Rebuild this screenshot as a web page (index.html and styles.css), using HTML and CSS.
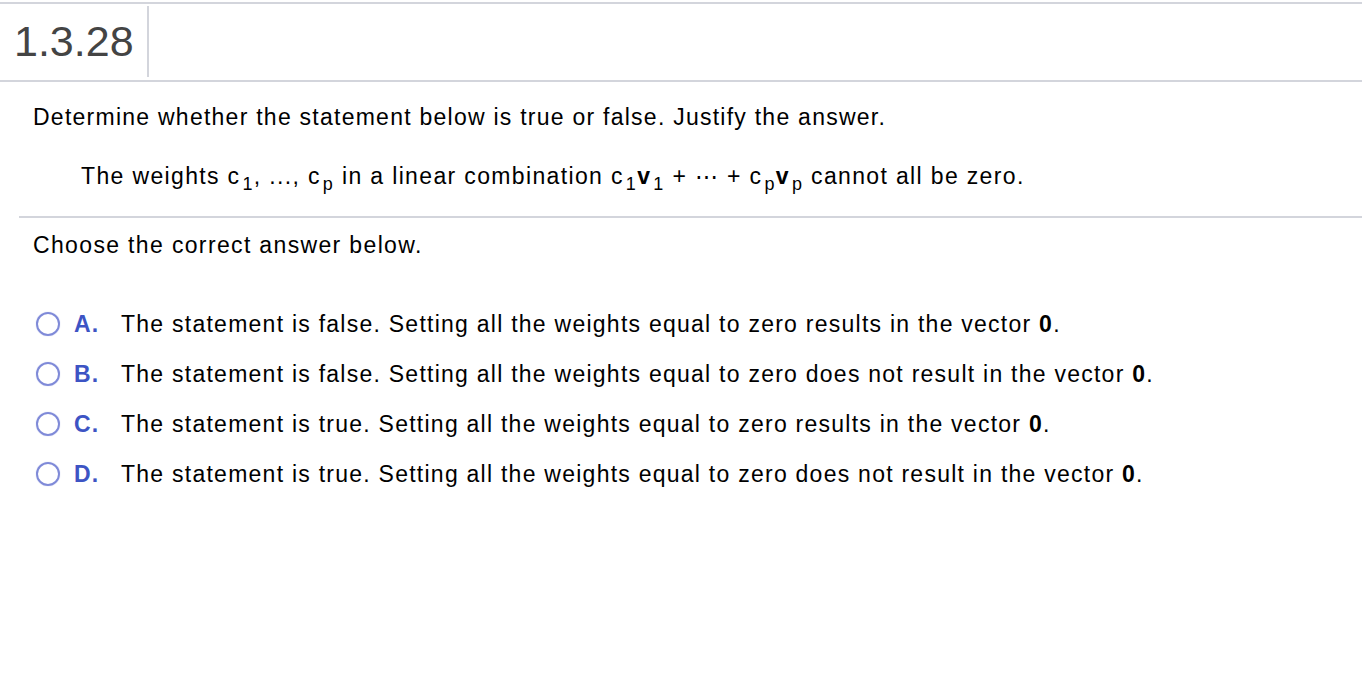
FILE: index.html
```html
<!DOCTYPE html>
<html>
<head>
<meta charset="utf-8">
<link rel="stylesheet" href="styles.css">
</head>
<body>
<div class="header">
  <div class="title">1.3.28</div>
</div>
<div class="content">
  <div class="line prompt">Determine whether the statement below is true or false. Justify the answer.</div>
  <div class="line statement">The weights c<sub>1</sub>, ..., c<sub>p</sub> in a linear combination c<sub>1</sub><b>v</b><sub>1</sub> + ⋯ + c<sub>p</sub><b>v</b><sub>p</sub> cannot all be zero.</div>
</div>
<div class="rule"></div>
<div class="content">
  <div class="line choose">Choose the correct answer below.</div>
  <div class="options">
    <div class="option"><span class="radio"></span><span class="letter">A.</span><span class="text">The statement is false. Setting all the weights equal to zero results in the vector <b>0</b>.</span></div>
    <div class="option"><span class="radio"></span><span class="letter">B.</span><span class="text">The statement is false. Setting all the weights equal to zero does not result in the vector <b>0</b>.</span></div>
    <div class="option"><span class="radio"></span><span class="letter">C.</span><span class="text">The statement is true. Setting all the weights equal to zero results in the vector <b>0</b>.</span></div>
    <div class="option"><span class="radio"></span><span class="letter">D.</span><span class="text">The statement is true. Setting all the weights equal to zero does not result in the vector <b>0</b>.</span></div>
  </div>
</div>
</body>
</html>
```
FILE: styles.css
```css
html, body {
  margin: 0;
  padding: 0;
  background: #fff;
  font-family: "Liberation Sans", Arial, sans-serif;
  color: #000;
}
.header {
  margin-top: 2px;
  border-top: 2px solid #d3d5dc;
  border-bottom: 2px solid #d3d5dc;
  display: flex;
  align-items: stretch;
  padding: 2px 0 3px 0;
  box-sizing: border-box;
  height: 80px;
}
.title {
  width: 133px;
  padding-left: 14px;
  border-right: 2px solid #d3d5dc;
  font-size: 43px;
  color: #444;
  display: flex;
  align-items: center;
}
.content {
  padding-left: 33px;
}
.line {
  font-size: 23px;
  letter-spacing: 1.25px;
  line-height: 26px;
  height: 26px;
  white-space: nowrap;
}
.prompt {
  padding-top: 22px;
}
.statement {
  margin-top: 33px;
  padding-left: 48px;
  letter-spacing: 1.35px;
}
.statement sub {
  font-size: 18px;
  vertical-align: -6px;
  line-height: 0;
  margin-left: 2px;
}
.rule {
  margin-top: 27px;
  margin-left: 19px;
  border-top: 2px solid #d3d5dc;
}
.choose {
  margin-top: 14px;
  letter-spacing: 1.35px;
}
.options {
  margin-top: 53px;
  display: flex;
  flex-direction: column;
  gap: 24px;
}
.option {
  display: flex;
  align-items: center;
  height: 26px;
  font-size: 23px;
  letter-spacing: 1.25px;
  white-space: nowrap;
}
.radio {
  width: 20px;
  height: 20px;
  border: 2px solid #7f8ad8;
  border-radius: 50%;
  margin-left: 3px;
  box-sizing: content-box;
  box-shadow: 0 0 1px #aab2e6;
  flex: none;
}
.letter {
  margin-left: 14px;
  width: 47px;
  flex: none;
  font-weight: bold;
  color: #3d54c4;
}
```
